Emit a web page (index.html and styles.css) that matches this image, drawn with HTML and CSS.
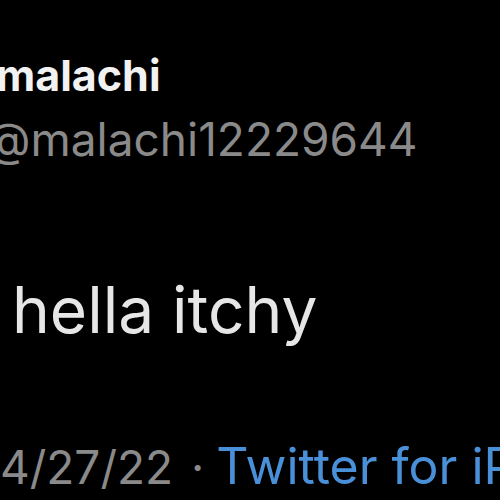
FILE: index.html
```html
<!DOCTYPE html>
<html>
<head>
<meta charset="utf-8">
<link rel="stylesheet" href="styles.css">
</head>
<body>
<div class="tweet">
  <div class="name">malachi</div>
  <div class="handle">@malachi12229644</div>
  <div class="text">hella itchy</div>
  <div class="meta"><span class="date">4/27/22</span><span class="dot">·</span><span class="source">Twitter for iPhone</span></div>
</div>
</body>
</html>
```

FILE: styles.css
```css
html, body {
  margin: 0;
  padding: 0;
  background: #000;
  width: 500px;
  height: 500px;
  overflow: hidden;
}
.tweet {
  font-family: "Inter", "Liberation Sans", sans-serif;
  padding-top: 54px;
  white-space: nowrap;
}
.name {
  font-size: 43px;
  line-height: 42px;
  font-weight: 700;
  color: #f2f2f2;
  margin-left: -4px;
}
.handle {
  font-size: 46px;
  line-height: 46px;
  color: #8a8a8a;
  margin-top: 20px;
  margin-left: -14px;
}
.text {
  font-size: 64px;
  line-height: 64px;
  color: #e6e6e6;
  margin-top: 116px;
  margin-left: 12px;
}
.meta {
  font-size: 46px;
  line-height: 46px;
  color: #8a8a8a;
  margin-top: 101px;
  display: flex;
  align-items: baseline;
}
.dot {
  margin: 0 12px 0 18px;
}
.source {
  font-size: 50px;
  color: #4a90d9;
}
```
